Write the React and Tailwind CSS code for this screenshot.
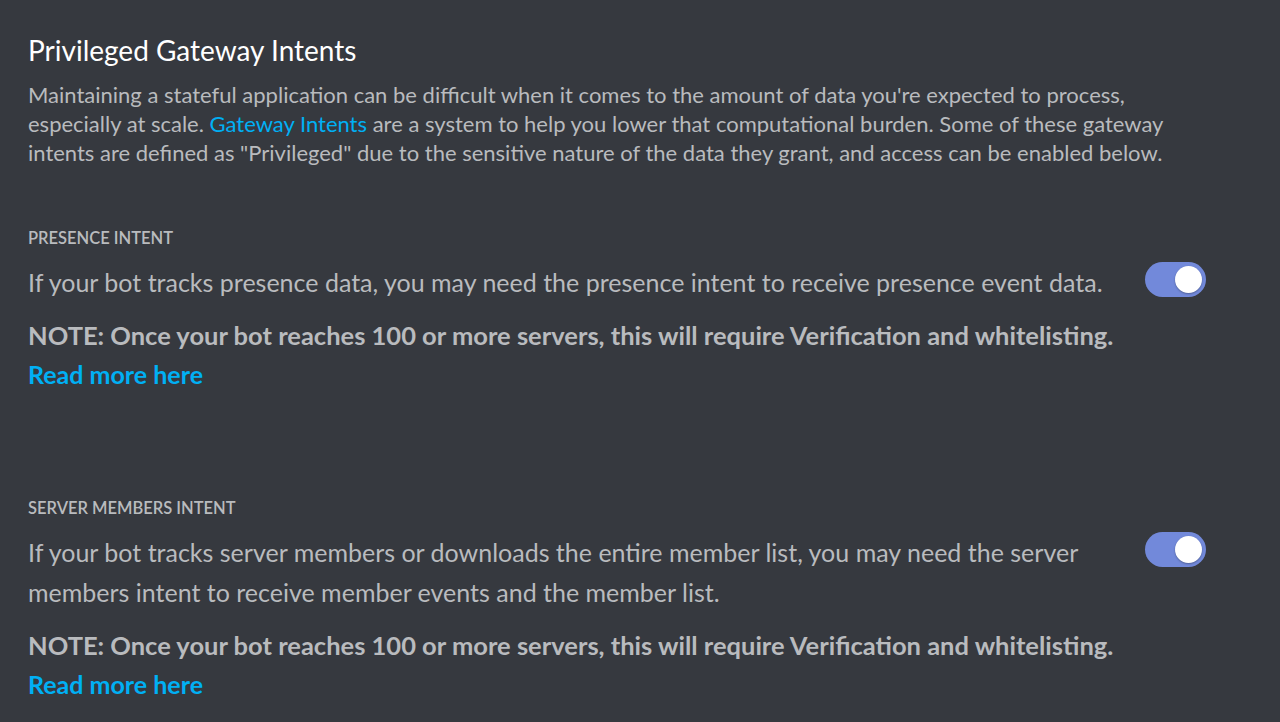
import React from 'react'

function Toggle() {
  return (
    <div className="relative w-[61px] h-[35px] rounded-full bg-[#7289da] shrink-0">
      <div className="absolute right-[4px] top-[4px] w-[27px] h-[27px] rounded-full bg-white shadow-[0_1px_2px_rgba(0,0,0,0.3)]" />
    </div>
  )
}

function Intent({ label, children }) {
  return (
    <section>
      <h3 className="text-[16.5px] leading-[20px] font-semibold uppercase text-[#b9bbbe]">{label}</h3>
      <div className="mt-[14px] flex items-start justify-between">
        <p className="text-[25px] leading-[40px] text-[#b9bbbe]">{children}</p>
        <div className="mr-[46px]">
          <Toggle />
        </div>
      </div>
      <p className="mt-[14px] text-[25.5px] leading-[39px] font-bold text-[#b9bbbe]">
        NOTE: Once your bot reaches 100 or more servers, this will require Verification and whitelisting.
      </p>
      <a className="block text-[25px] leading-[39px] font-bold text-[#00b0f4]">Read more here</a>
    </section>
  )
}

export default function App() {
  return (
    <div className="min-h-screen w-full bg-[#36393f] px-[28px] pt-[32px] font-['Lato',sans-serif]">
      <h1 className="text-[28px] leading-[36px] text-white">Privileged Gateway Intents</h1>
      <p className="mt-[12px] text-[22px] leading-[29px] text-[#b9bbbe]">
        Maintaining a stateful application can be difficult when it comes to the amount of data you're expected to process,
        <br />
        especially at scale. <a className="text-[#00b0f4]">Gateway Intents</a> are a system to help you lower that computational burden. Some of these gateway
        <br />
        intents are defined as "Privileged" due to the sensitive nature of the data they grant, and access can be enabled below.
      </p>
      <div className="mt-[61px]">
        <Intent label="Presence Intent">
          If your bot tracks presence data, you may need the presence intent to receive presence event data.
        </Intent>
      </div>
      <div className="mt-[104px]">
        <Intent label="Server Members Intent">
          If your bot tracks server members or downloads the entire member list, you may need the server
          <br />
          members intent to receive member events and the member list.
        </Intent>
      </div>
    </div>
  )
}
